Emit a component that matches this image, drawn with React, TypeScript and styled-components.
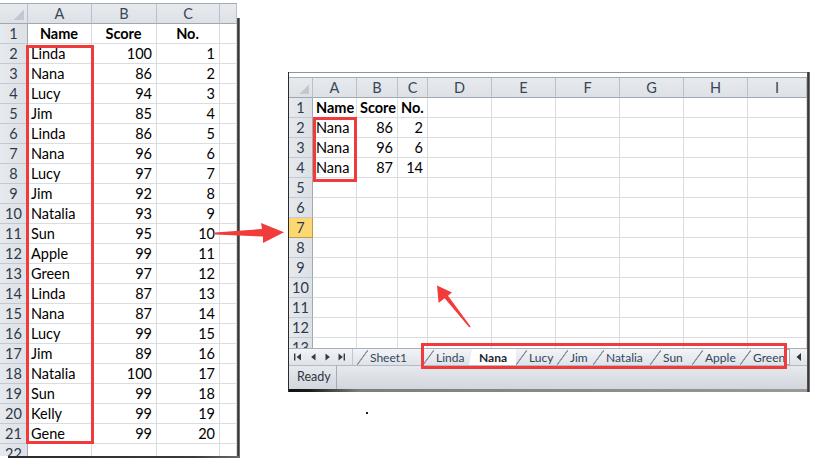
import styled, { createGlobalStyle } from 'styled-components'

const GlobalStyle = createGlobalStyle`
  html, body {
    margin: 0;
    padding: 0;
    background: #fff;
  }
  body {
    width: 813px;
    height: 458px;
    overflow: hidden;
    font-family: Lato, 'Liberation Sans', sans-serif;
  }
`

type Row = [string, number, number]

const leftRows: Row[] = [
  ['Linda', 100, 1],
  ['Nana', 86, 2],
  ['Lucy', 94, 3],
  ['Jim', 85, 4],
  ['Linda', 86, 5],
  ['Nana', 96, 6],
  ['Lucy', 97, 7],
  ['Jim', 92, 8],
  ['Natalia', 93, 9],
  ['Sun', 95, 10],
  ['Apple', 99, 11],
  ['Green', 97, 12],
  ['Linda', 87, 13],
  ['Nana', 87, 14],
  ['Lucy', 99, 15],
  ['Jim', 89, 16],
  ['Natalia', 100, 17],
  ['Sun', 99, 18],
  ['Kelly', 99, 19],
  ['Gene', 99, 20],
]

const rightRows: Row[] = [
  ['Nana', 86, 2],
  ['Nana', 96, 6],
  ['Nana', 87, 14],
]

const tabs: { name: string; w: number; active?: boolean }[] = [
  { name: 'Sheet1', w: 66 },
  { name: 'Linda', w: 46 },
  { name: 'Nana', w: 47, active: true },
  { name: 'Lucy', w: 41 },
  { name: 'Jim', w: 36 },
  { name: 'Natalia', w: 57 },
  { name: 'Sun', w: 42 },
  { name: 'Apple', w: 48 },
  { name: 'Green', w: 46 },
]

const Page = styled.div`
  position: relative;
  width: 813px;
  height: 458px;
  display: flex;
  align-items: flex-start;
`

/* ---------- left window ---------- */

const LeftWindow = styled.div`
  display: flex;
  flex-direction: column;
  width: 240px;
  padding-top: 3px;
`

const LeftBody = styled.div`
  display: flex;
`

const SideShadow = styled.div<{ $top: number }>`
  flex: none;
  width: 3px;
  margin-top: ${({ $top }) => $top}px;
  background: linear-gradient(to right, #5a5a5a, #3a3a3a, #8a8a8a);
`

const LeftBottom = styled.div`
  height: 3px;
  margin-left: 8px;
  background: linear-gradient(to right, #2a2a2a, #3a3a3a 80%, #6a6a6a);
`

/* ---------- grid ---------- */

const SheetGrid = styled.div<{ $cols: string; $height: number }>`
  display: grid;
  grid-template-columns: ${({ $cols }) => $cols};
  grid-auto-rows: 20px;
  height: ${({ $height }) => $height}px;
  overflow: hidden;
  border-top: 1px solid #a4abb4;
  background: #fff;
  font-size: 14.5px;
  color: #000;
`

const CellBase = styled.div`
  box-sizing: border-box;
  height: 20px;
  border-right: 1px solid #dadcdf;
  border-bottom: 1px solid #dadcdf;
  line-height: 19px;
  white-space: nowrap;
  overflow: hidden;
`

const Cell = styled(CellBase)<{ $align?: 'left' | 'right' | 'center'; $bold?: boolean }>`
  text-align: ${({ $align }) => $align ?? 'left'};
  font-weight: ${({ $bold }) => ($bold ? 700 : 400)};
  padding: 0 4px 0 3px;
`

const ColHead = styled(CellBase)`
  text-align: center;
  background: linear-gradient(#e7eaee, #dde1e6);
  border-right: 1px solid #b9c0c9;
  border-bottom: 1px solid #9fa8b3;
  color: #3a4658;
`

const Corner = styled(ColHead)`
  position: relative;
  &::after {
    content: '';
    position: absolute;
    right: 3px;
    bottom: 3px;
    width: 10px;
    height: 10px;
    background: linear-gradient(to top left, #c3c8cf 50%, transparent 50%);
  }
`

const RowHead = styled(CellBase)<{ $selected?: boolean }>`
  text-align: center;
  background: ${({ $selected }) => ($selected ? '#fbd872' : 'linear-gradient(to right, #e6e9ed, #dde1e6)')};
  border-right: 1px solid ${({ $selected }) => ($selected ? '#c39a45' : '#9fa8b3')};
  border-bottom: 1px solid ${({ $selected }) => ($selected ? '#c39a45' : '#c3c9d1')};
  color: #2e3a4a;
`

/* ---------- right window ---------- */

const RightWindow = styled.div`
  display: flex;
  margin-left: 48px;
  margin-top: 72px;
  border-left: 1px solid #2a2a2a;
`

const Frame = styled.div`
  display: flex;
  flex-direction: column;
  width: 518px;
  border-top: 1px solid #8f959d;
  padding-top: 4px;
`

const TabBar = styled.div`
  display: flex;
  height: 17px;
  box-sizing: border-box;
  border-top: 1px solid #a7afb9;
  background: linear-gradient(#f2f4f6, #dfe3e8);
`

const NavArea = styled.div`
  flex: none;
  width: 63px;
  border-right: 1px solid #c2c8cf;
  display: flex;
  align-items: center;
`

const TabStrip = styled.div`
  flex: 1;
  min-width: 0;
  display: flex;
  overflow: hidden;
  padding-left: 4px;
`

const Tab = styled.div<{ $w: number; $active?: boolean }>`
  position: relative;
  flex: none;
  box-sizing: border-box;
  width: ${({ $w }) => $w}px;
  padding-left: ${({ $active }) => ($active ? 10 : 13)}px;
  padding-top: 1px;
  overflow: hidden;
  white-space: nowrap;
  font-size: 12px;
  line-height: 15px;
  font-weight: ${({ $active }) => ($active ? 700 : 400)};
  color: ${({ $active }) => ($active ? '#1e2633' : '#34455c')};
  background: ${({ $active }) => ($active ? '#fff' : 'transparent')};
  clip-path: ${({ $active }) =>
    $active ? 'polygon(0 100%, 3px 0, 100% 0, 100% 100%)' : 'none'};

  &::before {
    content: '';
    position: absolute;
    left: 0;
    bottom: 0;
    width: 11px;
    height: 15px;
    display: ${({ $active }) => ($active ? 'none' : 'block')};
    background: linear-gradient(
      to bottom right,
      transparent calc(50% - 0.9px),
      #8a94a1 calc(50% - 0.4px),
      #8a94a1 calc(50% + 0.4px),
      transparent calc(50% + 0.9px)
    );
  }
`

const Splitter = styled.div`
  flex: none;
  width: 4px;
  box-sizing: border-box;
  background: #fff;
  border: 1px solid #a4acb6;
`

const ScrollStub = styled.div`
  flex: none;
  width: 17px;
  display: flex;
  align-items: center;
  padding-left: 6px;
  box-sizing: border-box;
`

const StatusBar = styled.div`
  display: flex;
  height: 24px;
  box-sizing: border-box;
  border-top: 1px solid #b3bac3;
  background: linear-gradient(#e6e9ed, #d2d7de);
`

const StatusText = styled.div`
  width: 48px;
  box-sizing: border-box;
  padding-left: 8px;
  border-right: 1px solid #a5adb8;
  font-size: 12.5px;
  line-height: 22px;
  color: #2b3441;
`

const FrameBottom = styled.div`
  height: 3px;
  background: linear-gradient(to right, #111 0, #1a1a1a 20px, #7d7d7d 70px, #999 100%);
`

/* ---------- annotations ---------- */

const Mark = styled.div<{ $x: number; $y: number; $w: number; $h: number }>`
  position: absolute;
  left: ${({ $x }) => $x}px;
  top: ${({ $y }) => $y}px;
  width: ${({ $w }) => $w}px;
  height: ${({ $h }) => $h}px;
  box-sizing: border-box;
  border: 3px solid #f03a3c;
  pointer-events: none;
`

const Overlay = styled.svg`
  position: absolute;
  left: 0;
  top: 0;
  pointer-events: none;
`

const Dot = styled.div`
  position: absolute;
  left: 366px;
  top: 412px;
  width: 2px;
  height: 2px;
  background: #222;
`

const NavIcons = () => (
  <svg width="63" height="16" viewBox="0 0 63 16">
    <g fill="#353b45">
      <rect x="5" y="4.5" width="1.4" height="7" />
      <path d="M12 4.5 L7.6 8 L12 11.5 Z" />
      <path d="M26.5 4.5 L22.1 8 L26.5 11.5 Z" />
      <path d="M36.5 4.5 L40.9 8 L36.5 11.5 Z" />
      <path d="M49.5 4.5 L53.9 8 L49.5 11.5 Z" />
      <rect x="54.6" y="4.5" width="1.4" height="7" />
    </g>
  </svg>
)

const LEFT_COLS = '28px 64px 65px 63px 17px'
const RIGHT_COLS = '24px 44px 41px 30px 64px 64px 64px 64px 64px 59px'
const RIGHT_LETTERS = ['A', 'B', 'C', 'D', 'E', 'F', 'G', 'H', 'I']

const LeftSheet = () => (
  <LeftWindow>
    <LeftBody>
      <SheetGrid $cols={LEFT_COLS} $height={452}>
        <Corner />
        {['A', 'B', 'C', ''].map((l, i) => (
          <ColHead key={i}>{l}</ColHead>
        ))}
        <RowHead>1</RowHead>
        <Cell $align="center" $bold>Name</Cell>
        <Cell $align="center" $bold>Score</Cell>
        <Cell $align="center" $bold>No.</Cell>
        <Cell />
        {leftRows.map(([name, score, no], i) => [
          <RowHead key={`h${i}`}>{i + 2}</RowHead>,
          <Cell key={`a${i}`}>{name}</Cell>,
          <Cell key={`b${i}`} $align="right">{score}</Cell>,
          <Cell key={`c${i}`} $align="right">{no}</Cell>,
          <Cell key={`d${i}`} />,
        ])}
        <RowHead>22</RowHead>
        <Cell />
        <Cell />
        <Cell />
        <Cell />
      </SheetGrid>
      <SideShadow $top={15} />
    </LeftBody>
    <LeftBottom />
  </LeftWindow>
)

const RightSheet = () => {
  const empty = (n: number, key: string) =>
    Array.from({ length: n }, (_, i) => <Cell key={`${key}${i}`} />)
  return (
    <RightWindow>
      <Frame>
        <SheetGrid $cols={RIGHT_COLS} $height={270}>
          <Corner />
          {RIGHT_LETTERS.map((l) => (
            <ColHead key={l}>{l}</ColHead>
          ))}
          <RowHead>1</RowHead>
          <Cell $bold>Name</Cell>
          <Cell $align="center" $bold>Score</Cell>
          <Cell $align="center" $bold>No.</Cell>
          {empty(6, 'r1')}
          {rightRows.map(([name, score, no], i) => [
            <RowHead key={`h${i}`}>{i + 2}</RowHead>,
            <Cell key={`a${i}`}>{name}</Cell>,
            <Cell key={`b${i}`} $align="right">{score}</Cell>,
            <Cell key={`c${i}`} $align="right">{no}</Cell>,
            ...empty(6, `e${i}`),
          ])}
          {Array.from({ length: 9 }, (_, i) => [
            <RowHead key={`rh${i}`} $selected={i + 5 === 7}>
              {i + 5}
            </RowHead>,
            ...empty(9, `x${i}`),
          ])}
        </SheetGrid>
        <TabBar>
          <NavArea>
            <NavIcons />
          </NavArea>
          <TabStrip>
            {tabs.map((t) => (
              <Tab key={t.name} $w={t.w} $active={t.active}>
                {t.name}
              </Tab>
            ))}
          </TabStrip>
          <Splitter />
          <ScrollStub>
            <svg width="6" height="8" viewBox="0 0 6 8">
              <path d="M5 0 L0.5 4 L5 8 Z" fill="#2f343b" />
            </svg>
          </ScrollStub>
        </TabBar>
        <StatusBar>
          <StatusText>Ready</StatusText>
        </StatusBar>
        <FrameBottom />
      </Frame>
      <SideShadow $top={0} />
    </RightWindow>
  )
}

const Arrows = () => (
  <Overlay width="813" height="458" viewBox="0 0 813 458">
    <g fill="#f23b3b">
      <polygon points="215,232.6 262,229 261,223 284,232.3 263,243 263,236.6 215,234.6" />
      <polygon points="437,285.5 452,292.5 448,295.8 470.6,326.4 469.4,327.4 444.6,298.2 438.6,303" />
    </g>
  </Overlay>
)

const App = () => {
  return (
    <>
      <GlobalStyle />
      <Page>
        <LeftSheet />
        <RightSheet />
        <Mark $x={26} $y={45} $w={68} $h={399} />
        <Mark $x={313} $y={117} $w={44} $h={65} />
        <Mark $x={421} $y={343} $w={366} $h={26} />
        <Arrows />
        <Dot />
      </Page>
    </>
  )
}

export default App
